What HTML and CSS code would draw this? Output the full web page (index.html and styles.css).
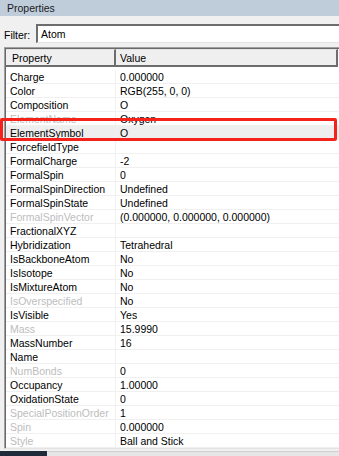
FILE: index.html
```html
<!DOCTYPE html>
<html lang="en">
<head>
    <meta charset="UTF-8">
    <meta name="viewport" content="width=device-width, initial-scale=1.0">
    <title>Properties</title>
    <link rel="stylesheet" href="styles.css">
</head>
<body>

    <div class="titlebar">Properties</div>

    <div class="filter">
        <label for="filter-box">Filter:</label>
        <div class="filter-box" id="filter-box">Atom</div>
    </div>

    <div class="grid">
        <div class="grid-head">
            <div class="head-cell name-col">Property</div>
            <div class="head-cell value-col">Value</div>
        </div>
        <div class="grid-body">
            <div class="row"><div class="name">Charge</div><div class="value">0.000000</div></div>
            <div class="row"><div class="name">Color</div><div class="value">RGB(255, 0, 0)</div></div>
            <div class="row"><div class="name">Composition</div><div class="value">O</div></div>
            <div class="row off"><div class="name">ElementName</div><div class="value">Oxygen</div></div>
            <div class="row selected"><div class="name">ElementSymbol</div><div class="value">O</div></div>
            <div class="row"><div class="name">ForcefieldType</div><div class="value"></div></div>
            <div class="row"><div class="name">FormalCharge</div><div class="value">-2</div></div>
            <div class="row"><div class="name">FormalSpin</div><div class="value">0</div></div>
            <div class="row"><div class="name">FormalSpinDirection</div><div class="value">Undefined</div></div>
            <div class="row"><div class="name">FormalSpinState</div><div class="value">Undefined</div></div>
            <div class="row off"><div class="name">FormalSpinVector</div><div class="value">(0.000000, 0.000000, 0.000000)</div></div>
            <div class="row"><div class="name">FractionalXYZ</div><div class="value"></div></div>
            <div class="row"><div class="name">Hybridization</div><div class="value">Tetrahedral</div></div>
            <div class="row"><div class="name">IsBackboneAtom</div><div class="value">No</div></div>
            <div class="row"><div class="name">IsIsotope</div><div class="value">No</div></div>
            <div class="row"><div class="name">IsMixtureAtom</div><div class="value">No</div></div>
            <div class="row off"><div class="name">IsOverspecified</div><div class="value">No</div></div>
            <div class="row"><div class="name">IsVisible</div><div class="value">Yes</div></div>
            <div class="row off"><div class="name">Mass</div><div class="value">15.9990</div></div>
            <div class="row"><div class="name">MassNumber</div><div class="value">16</div></div>
            <div class="row"><div class="name">Name</div><div class="value"></div></div>
            <div class="row off"><div class="name">NumBonds</div><div class="value">0</div></div>
            <div class="row"><div class="name">Occupancy</div><div class="value">1.00000</div></div>
            <div class="row"><div class="name">OxidationState</div><div class="value">0</div></div>
            <div class="row off"><div class="name">SpecialPositionOrder</div><div class="value">1</div></div>
            <div class="row off"><div class="name">Spin</div><div class="value">0.000000</div></div>
            <div class="row off"><div class="name">Style</div><div class="value">Ball and Stick</div></div>
        </div>
    </div>

    <div class="tabs">
        <div class="tab-dark"></div>
        <div class="tab-rest"></div>
    </div>

    <!-- red annotation box around the ElementSymbol row -->
    <div class="highlight"></div>

</body>
</html>
```

FILE: styles.css
```css
html, body {
    margin: 0;
    padding: 0;
}
body {
    width: 339px;
    height: 456px;
    overflow: hidden;
    position: relative;
    background-color: #f0f0f0;
    font-family: "Liberation Sans", Arial, sans-serif;
    font-size: 10.5px;
    color: #000;
}
.titlebar {
    height: 16px;
    line-height: 16px;
    padding-left: 7px;
    background-color: #bfcddb;
    color: #1b1b1b;
}
.filter {
    display: flex;
    align-items: center;
    margin-top: 8px;
    height: 19px;
}
.filter label {
    width: 32px;
    padding-left: 4px;
    padding-top: 3px;
}
.filter-box {
    flex: 1;
    height: 19px;
    box-sizing: border-box;
    line-height: 17px;
    padding-left: 3px;
    background-color: #fff;
    border-top: 2px solid #6d6d6d;
    border-left: 2px solid #6d6d6d;
    border-bottom: 1px solid #e3e3e3;
}
.grid {
    margin-top: 4px;
    margin-left: 4px;
    border-top: 1px solid #a0a0a0;
    border-left: 1px solid #a0a0a0;
    border-bottom: 1px solid #e3e3e3;
    background-color: #fff;
}
.grid-head {
    display: flex;
    height: 19px;
    border-top: 1px solid #696969;
    border-left: 1px solid #696969;
    box-sizing: border-box;
    background-color: #fff;
}
.head-cell {
    height: 18px;
    box-sizing: border-box;
    line-height: 17px;
    background-color: #efefef;
    border-top: 1px solid #e3e3e3;
    border-bottom: 2px solid #6d6d6d;
    border-right: 2px solid #6d6d6d;
}
.head-cell.name-col {
    width: 110px;
    padding-left: 6px;
}
.head-cell.value-col {
    width: 222px;
    padding-left: 4px;
}
.grid-body {
    border-left: 1px solid #696969;
    padding-top: 3px;
}
.row {
    display: flex;
    height: 14px;
    line-height: 14px;
    box-sizing: border-box;
    border-bottom: 1px solid #f0f0f0;
}
.row .name {
    width: 110px;
    box-sizing: border-box;
    padding-left: 4px;
    border-right: 1px solid #f0f0f0;
    white-space: nowrap;
    overflow: hidden;
}
.row .value {
    flex: 1;
    padding-left: 4px;
    white-space: nowrap;
    overflow: hidden;
}
.row.off .name {
    color: #bdbdbd;
}
.row.selected {
    background-color: #eeeeee;
}
.tabs {
    display: flex;
    margin-top: 2px;
    height: 6px;
}
.tab-dark {
    width: 47px;
    background-color: #1f2a3b;
}
.tab-rest {
    flex: 1;
    background-color: #e6e6e6;
    border-top: 1px solid #d0d0d0;
}
.highlight {
    position: absolute;
    left: 0;
    top: 118px;
    width: 337px;
    height: 23px;
    box-sizing: border-box;
    border: 3px solid #f5211b;
    border-radius: 2px;
}
```
